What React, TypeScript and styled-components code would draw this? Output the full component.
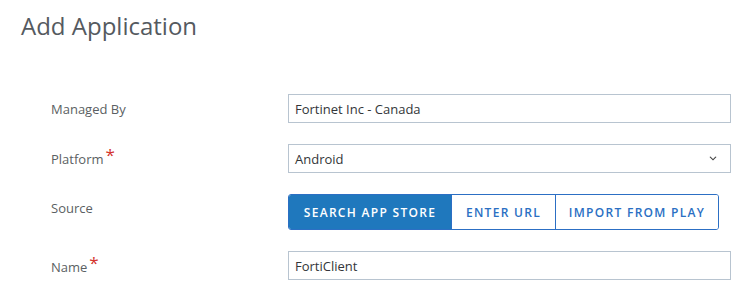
import React from 'react';
import styled, { createGlobalStyle } from 'styled-components';

const GlobalStyle = createGlobalStyle`
  body {
    margin: 0;
    background: #ffffff;
    font-family: 'Open Sans', 'Liberation Sans', sans-serif;
  }
`;

const Page = styled.div`
  width: 749px;
  height: 296px;
  overflow: hidden;
`;

const Title = styled.h1`
  margin: 0;
  padding: 10px 0 0 21px;
  font-size: 24px;
  line-height: 32px;
  font-weight: 400;
  color: #555a5f;
`;

const Form = styled.div`
  display: grid;
  grid-template-columns: 237px 443px;
  row-gap: 21px;
  padding: 52px 0 0 51px;
  align-items: center;
`;

const Label = styled.div<{ $offset?: number }>`
  font-size: 13px;
  color: #5b5f63;
  margin-top: ${(p) => p.$offset ?? 0}px;
`;

const Required = styled.span`
  color: #d3322b;
  font-size: 17px;
  position: relative;
  top: -3px;
  margin-left: 2px;
  line-height: 0;
`;

const Field = styled.div<{ $select?: boolean }>`
  box-sizing: border-box;
  height: 29px;
  border: 1px solid #b8c4d0;
  padding: 0 ${(p) => (p.$select ? 13 : 6)}px 0 6px;
  display: flex;
  align-items: center;
  justify-content: space-between;
  font-size: 13px;
  color: #333639;
`;

const Segmented = styled.div`
  display: flex;
  width: 431px;
  height: 36px;
  box-sizing: border-box;
  border: 1px solid #2c6fc4;
  border-radius: 3px;
  overflow: hidden;
`;

const Segment = styled.button<{ $active?: boolean; $width: number }>`
  width: ${(p) => p.$width}px;
  border: none;
  border-right: 1px solid #2c6fc4;
  background: ${(p) => (p.$active ? '#1f78bd' : '#ffffff')};
  color: ${(p) => (p.$active ? '#ffffff' : '#2a6fc3')};
  font-family: 'Open Sans', 'Liberation Sans', sans-serif;
  font-size: 12px;
  font-weight: 600;
  letter-spacing: 1.3px;
  padding: 0;
  cursor: pointer;
  &:last-child {
    border-right: none;
  }
`;

const Chevron = () => (
  <svg width="8" height="6" viewBox="0 0 8 6">
    <path d="M0.5 1 L4 4.5 L7.5 1 L6.5 0.5 L4 3 L1.5 0.5 Z" fill="#444" />
  </svg>
);

export default function App() {
  return (
    <Page>
      <GlobalStyle />
      <Title>Add Application</Title>
      <Form>
        <Label>Managed By</Label>
        <Field>Fortinet Inc - Canada</Field>

        <Label>
          Platform<Required>*</Required>
        </Label>
        <Field $select>
          Android
          <Chevron />
        </Field>

        <Label $offset={-8}>Source</Label>
        <Segmented>
          <Segment $active $width={163}>SEARCH APP STORE</Segment>
          <Segment $width={104}>ENTER URL</Segment>
          <Segment $width={162}>IMPORT FROM PLAY</Segment>
        </Segmented>

        <Label $offset={2}>
          Name<Required>*</Required>
        </Label>
        <Field>FortiClient</Field>
      </Form>
    </Page>
  );
}
